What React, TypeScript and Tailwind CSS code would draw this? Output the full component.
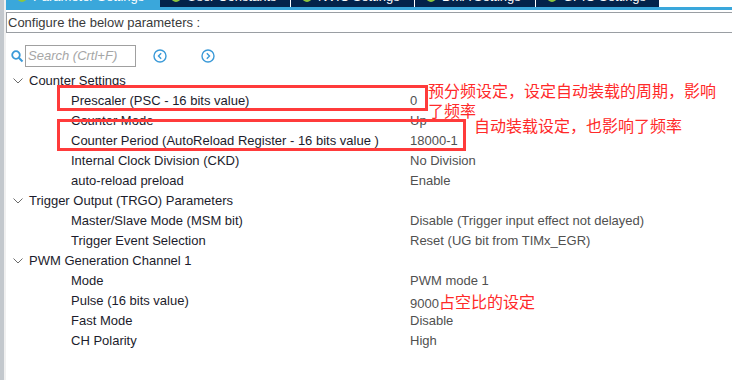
import React from 'react'

const TABS = [
  { label: 'Parameter Settings', w: 'w-[154px]', active: true },
  { label: 'User Constants', w: 'w-[130px]', active: false },
  { label: 'NVIC Settings', w: 'w-[124px]', active: false },
  { label: 'DMA Settings', w: 'w-[121px]', active: false },
  { label: 'GPIO Settings', w: 'w-[124px]', active: false },
]

type Row =
  | { kind: 'group'; label: string }
  | { kind: 'item'; label: string; value: string; note?: string }

const ROWS: Row[] = [
  { kind: 'group', label: 'Counter Settings' },
  { kind: 'item', label: 'Prescaler (PSC - 16 bits value)', value: '0' },
  { kind: 'item', label: 'Counter Mode', value: 'Up' },
  { kind: 'item', label: 'Counter Period (AutoReload Register - 16 bits value )', value: '18000-1' },
  { kind: 'item', label: 'Internal Clock Division (CKD)', value: 'No Division' },
  { kind: 'item', label: 'auto-reload preload', value: 'Enable' },
  { kind: 'group', label: 'Trigger Output (TRGO) Parameters' },
  { kind: 'item', label: 'Master/Slave Mode (MSM bit)', value: 'Disable (Trigger input effect not delayed)' },
  { kind: 'item', label: 'Trigger Event Selection', value: 'Reset (UG bit from TIMx_EGR)' },
  { kind: 'group', label: 'PWM Generation Channel 1' },
  { kind: 'item', label: 'Mode', value: 'PWM mode 1' },
  { kind: 'item', label: 'Pulse (16 bits value)', value: '9000', note: '占空比的设定' },
  { kind: 'item', label: 'Fast Mode', value: 'Disable' },
  { kind: 'item', label: 'CH Polarity', value: 'High' },
]

const CJK = "font-['Noto_Sans_CJK_SC',sans-serif]"

function TabDot() {
  return <span className="w-[10px] h-[10px] rounded-full bg-[#f2f23a] border-2 border-[#8cc63f] shrink-0" />
}

function Chevron() {
  return (
    <svg width="10" height="6" viewBox="0 0 10 6" className="shrink-0">
      <path d="M0.5 0.5 L5 5 L9.5 0.5" fill="none" stroke="#6b6b6b" strokeWidth="1" />
    </svg>
  )
}

function CircleArrow({ dir }: { dir: 'left' | 'right' }) {
  return (
    <svg width="14" height="14" viewBox="0 0 14 14">
      <circle cx="7" cy="7" r="6" fill="none" stroke="#3b9ad8" strokeWidth="1.4" />
      <path
        d={dir === 'left' ? 'M8.2 4.3 L5.5 7 L8.2 9.7' : 'M5.8 4.3 L8.5 7 L5.8 9.7'}
        fill="none"
        stroke="#3b9ad8"
        strokeWidth="1.4"
      />
    </svg>
  )
}

export default function App() {
  return (
    <div className="relative w-[732px] h-[380px] overflow-hidden bg-white flex font-['Liberation_Sans',Arial,sans-serif] text-[13px]">
      <div className="w-[4px] bg-[#c3c8cd] shrink-0" />
      <div className="w-[2px] bg-[#f0f0f0] shrink-0" />

      <div className="flex-1 flex flex-col min-w-0">
        {/* Tabs, mostly scrolled off the top */}
        <div className="flex h-[21px] -mt-[14px] shrink-0">
          {TABS.map((t, i) => (
            <div
              key={t.label}
              className={`${t.w} flex items-center gap-[6px] pl-[11px] text-white leading-none ${
                t.active ? 'bg-[#3aa7db]' : 'bg-[#03234b]'
              } ${i > 1 ? 'border-l border-white' : ''}`}
            >
              <TabDot />
              <span className="whitespace-nowrap">{t.label}</span>
            </div>
          ))}
        </div>
        <div className="h-[3px] bg-[#3aa7db] shrink-0" />
        <div className="h-[2px] shrink-0" />

        {/* Header */}
        <div className="h-[21px] border border-r-0 border-[#9a9ea3] flex items-center pl-[1px] text-[#3a3a3a] shrink-0">
          Configure the below parameters :
        </div>

        {/* Search */}
        <div className="flex items-center h-[22px] mt-[12px] shrink-0">
          <svg width="13" height="13" viewBox="0 0 13 13" className="ml-[5px]">
            <circle cx="5" cy="5" r="3.8" fill="none" stroke="#3b9ad8" strokeWidth="1.8" />
            <path d="M7.8 7.8 L11.5 11.5" stroke="#3b9ad8" strokeWidth="2" />
          </svg>
          <div className="ml-[1px] w-[111px] h-[22px] border border-[#a0a0a0] flex items-center pl-[2px] italic text-[#a6a6a6]">
            Search (Crtl+F)
          </div>
          <div className="ml-[17px]">
            <CircleArrow dir="left" />
          </div>
          <div className="ml-[34px]">
            <CircleArrow dir="right" />
          </div>
        </div>

        {/* Tree */}
        <div className="flex flex-col mt-[4px]">
          {ROWS.map((r, i) =>
            r.kind === 'group' ? (
              <div key={i} className="h-[20px] flex items-center text-[#1c1c2c] whitespace-nowrap">
                <span className="w-[23px] pl-[7px] flex items-center">
                  <Chevron />
                </span>
                {r.label}
              </div>
            ) : (
              <div key={i} className="h-[20px] flex items-center whitespace-nowrap">
                <span className="w-[404px] pl-[65px] text-[#1c1c2c]">{r.label}</span>
                <span className="text-[#505050]">
                  {r.value}
                  {r.note && <span className={`${CJK} text-[16px] text-[#ff2a2a]`}>{r.note}</span>}
                </span>
              </div>
            )
          )}
        </div>
      </div>

      {/* Annotations drawn over the table */}
      <div className="absolute left-[57px] top-[85px] w-[371px] h-[26px] border-[3px] border-[#ff3b3b]" />
      <div className="absolute left-[57px] top-[119px] w-[409px] h-[32px] border-[3px] border-[#ff3b3b]" />
      <div className={`absolute left-[428px] top-[80px] ${CJK} text-[16px] leading-[20px] text-[#ff2a2a] whitespace-nowrap`}>
        预分频设定，设定自动装载的周期，影响
        <br />
        了频率
      </div>
      <div className={`absolute left-[474px] top-[116px] ${CJK} text-[16px] leading-[19px] text-[#ff2a2a] whitespace-nowrap`}>
        自动装载设定，也影响了频率
      </div>
    </div>
  )
}
